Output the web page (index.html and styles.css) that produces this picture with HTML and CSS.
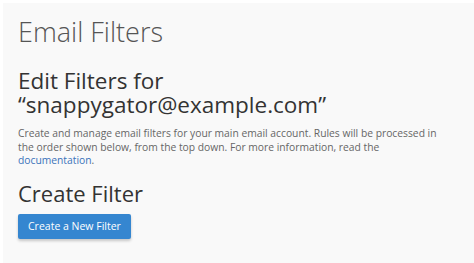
FILE: index.html
```html
<!DOCTYPE html>
<html>
<head>
<meta charset="utf-8">
<link rel="stylesheet" href="styles.css">
</head>
<body>
<div class="page">
  <h1 class="title">Email Filters</h1>
  <h2 class="subtitle">Edit Filters for<br>“snappygator@example.com”</h2>
  <p class="desc">Create and manage email filters for your main email account. Rules will be processed in the order shown below, from the top down. For more information, read the <a href="#" class="link">documentation</a>.</p>
  <h2 class="section">Create Filter</h2>
  <button class="btn">Create a New Filter</button>
</div>
</body>
</html>
```
FILE: styles.css
```css
html, body {
  margin: 0;
  padding: 0;
  background: #fff;
}
body {
  padding: 3px 0 0 3px;
  font-family: "Open Sans", sans-serif;
}
.page {
  background: #f9f9f9;
  height: 260px;
  padding: 0 20px 0 15px;
  box-sizing: border-box;
  overflow: hidden;
}
.title {
  margin: 0;
  padding-top: 10px;
  font-size: 27px;
  font-weight: 300;
  line-height: 38px;
  color: #555;
}
.subtitle {
  margin: 18px 0 0;
  font-size: 22.5px;
  font-weight: 400;
  line-height: 24px;
  color: #333;
}
.desc {
  margin: 10px 0 0;
  font-size: 10.3px;
  line-height: 13.5px;
  color: #666;
}
.link {
  color: #3b73b9;
  text-decoration: none;
}
.section {
  margin: 11px 0 0;
  font-size: 22px;
  font-weight: 400;
  line-height: 28px;
  color: #333;
}
.btn {
  display: block;
  margin-top: 7px;
  background: #3586d0;
  color: #fff;
  border: 0;
  border-radius: 2px;
  font-family: "Open Sans", sans-serif;
  font-size: 10.5px;
  height: 25px;
  padding: 0 10px;
  box-shadow: 0 2px 3px rgba(0,0,0,0.2);
}
```
